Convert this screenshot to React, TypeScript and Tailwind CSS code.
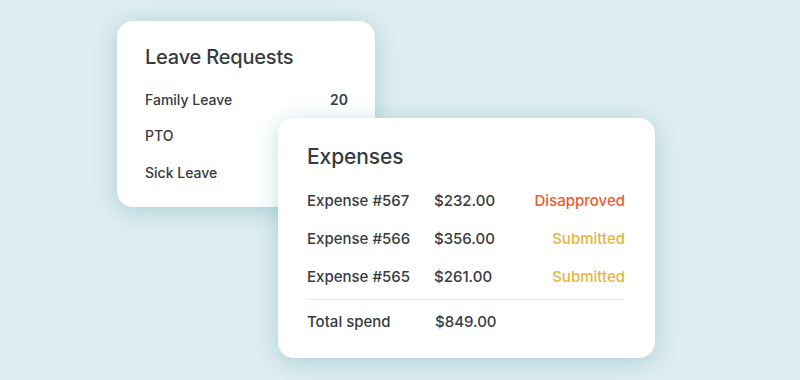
const leave = [
  { name: 'Family Leave', count: '20' },
  { name: 'PTO', count: '' },
  { name: 'Sick Leave', count: '' },
];

const expenses = [
  { id: 'Expense #567', amount: '$232.00', status: 'Disapproved', tone: 'text-[#ef5b2f]' },
  { id: 'Expense #566', amount: '$356.00', status: 'Submitted', tone: 'text-[#e6b53c]' },
  { id: 'Expense #565', amount: '$261.00', status: 'Submitted', tone: 'text-[#e6b53c]' },
];

export default function App() {
  return (
    <div
      className="w-[800px] h-[380px] overflow-hidden bg-[#deedf1] text-[#363b40] pl-[117px] pt-[21px]"
      style={{ fontFamily: 'Inter, "Noto Sans", sans-serif' }}
    >
      {/* Leave Requests */}
      <div className="w-[258px] h-[186px] rounded-[16px] bg-white shadow-[0_4px_22px_rgba(88,160,165,0.38)] pl-[28px] pr-[27px] pt-[22px]">
        <h2 className="text-[20px] leading-[28px] font-medium tracking-[-0.2px]">Leave Requests</h2>
        <div className="mt-[10px] flex flex-col">
          {leave.map(row => (
            <div key={row.name} className="flex items-center justify-between h-[36.5px] text-[14px] font-medium">
              <span>{row.name}</span>
              <span className="font-semibold">{row.count}</span>
            </div>
          ))}
        </div>
      </div>

      {/* Expenses */}
      <div className="relative z-10 ml-[161px] mt-[-89px] w-[377px] h-[240px] rounded-[16px] bg-white shadow-[0_4px_22px_rgba(88,160,165,0.38)] pl-[29px] pr-[30px] pt-[25px]">
        <h2 className="text-[21px] leading-[28px] font-medium tracking-[-0.1px]">Expenses</h2>
        <div className="mt-[11px] flex flex-col">
          {expenses.map(row => (
            <div key={row.id} className="flex items-center h-[38px] text-[15px] font-medium">
              <span className="w-[127px]">{row.id}</span>
              <span className="flex-1">{row.amount}</span>
              <span className={row.tone}>{row.status}</span>
            </div>
          ))}
        </div>
        <div className="mt-[3px] border-t border-[#e6e8ea]" />
        <div className="flex items-center h-[44px] text-[15px] font-medium">
          <span className="w-[128px]">Total spend</span>
          <span>$849.00</span>
        </div>
      </div>
    </div>
  );
}
